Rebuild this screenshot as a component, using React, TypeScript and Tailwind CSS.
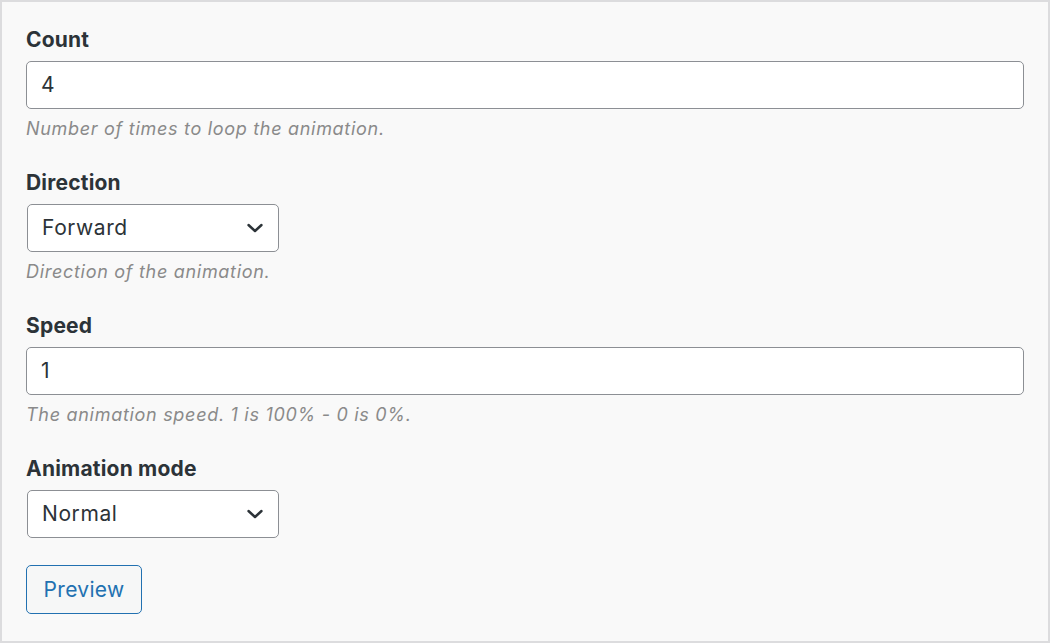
import React from 'react';

const fields = [
  { label: 'Count', kind: 'input', value: '4', help: 'Number of times to loop the animation.' },
  { label: 'Direction', kind: 'select', value: 'Forward', help: 'Direction of the animation.' },
  { label: 'Speed', kind: 'input', value: '1', help: 'The animation speed. 1 is 100% - 0 is 0%.' },
  { label: 'Animation mode', kind: 'select', value: 'Normal', help: '' },
];

function Chevron() {
  return (
    <svg width="18" height="12" viewBox="0 0 18 12" fill="none">
      <polyline
        points="2.5,3 9,9 15.5,3"
        stroke="#2c3338"
        strokeWidth="2.4"
        strokeLinecap="round"
        strokeLinejoin="round"
      />
    </svg>
  );
}

export default function App() {
  return (
    <div
      className="w-[1050px] h-[643px] border-2 border-[#dcdcde] bg-[#f9f9f9] pt-[24px] pl-[24px] pr-[24px] text-[#2c3338]"
      style={{ fontFamily: 'Inter, "Noto Sans", sans-serif' }}
    >
      {fields.map((field, i) => (
        <div key={field.label} className={i === 0 ? 'flex flex-col' : 'flex flex-col mt-[28px]'}>
          <label className="text-[21px] leading-[28px] font-bold tracking-[0.2px]">
            {field.label}
          </label>
          {field.kind === 'input' ? (
            <div className="mt-[7px] h-[48px] w-[998px] bg-white border border-[#8c8f94] rounded-[5px] flex items-center px-[14px] text-[21px] tracking-[0.4px]">
              {field.value}
            </div>
          ) : (
            <div className="mt-[7px] ml-px h-[48px] w-[252px] bg-white border border-[#8c8f94] rounded-[5px] flex items-center justify-between pl-[14px] pr-[14px] text-[21px] tracking-[0.6px]">
              <span>{field.value}</span>
              <Chevron />
            </div>
          )}
          {field.help && (
            <p className="mt-2 leading-6 text-[18px] italic tracking-[0.7px] text-[#8a8a8a]">
              {field.help}
            </p>
          )}
        </div>
      ))}
      <button className="mt-[27px] h-[49px] w-[116px] rounded-[5px] border-[1.5px] border-[#2271b1] bg-[#f6f7f7] text-[#2271b1] text-[21px] tracking-[0.3px]">
        Preview
      </button>
    </div>
  );
}
